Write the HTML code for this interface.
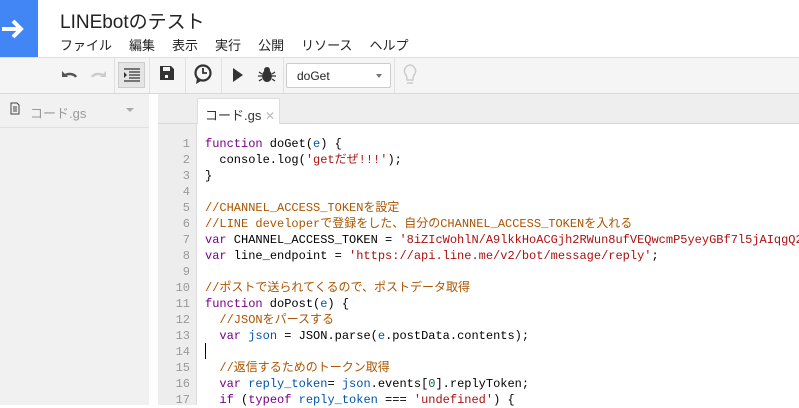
<!DOCTYPE html>
<html><head><meta charset="utf-8"><style>
*{margin:0;padding:0;box-sizing:border-box}
body{width:799px;height:405px;overflow:hidden;background:#fff;font-family:"Liberation Sans","Noto Sans CJK JP",sans-serif;position:relative}
.abs{position:absolute}
.logo{left:0;top:0;width:38px;height:57px;background:#4285f4}
.title{left:60px;top:7px;font-size:19px;color:#222}
.menu{left:60px;top:35px;font-size:13px;color:#222;white-space:nowrap}
.menu span{margin-right:17px}
.tb{left:0;top:57px;width:799px;height:37px;background:#f5f5f5;border-top:1px solid #e0e0e0;border-bottom:1px solid #d8d8d8}
.sep{top:58px;width:1px;height:35px;background:#e0e0e0}
.left{left:0;top:94px;width:149px;height:311px;background:#f1f1f1}
.lhead{left:0;top:94px;width:149px;height:34px;border-bottom:1px solid #e0e0e0}
.ed{left:158px;top:94px;width:641px;height:311px;background:#eee}
.tabbar{left:158px;top:94px;width:641px;height:30px;background:#eee;border-bottom:1px solid #d9d9d9}
.tab{left:197px;top:98px;width:83px;height:27px;background:#fff;border:1px solid #ddd;border-bottom:none;font-size:13px;color:#333;padding:6px 0 0 7px}
.gut{left:158px;top:124px;width:39px;height:281px;background:#ededed;border-right:1px solid #ddd}
.code{left:197px;top:124px;width:602px;height:281px;background:#fff}
.ln{position:absolute;left:158px;width:32px;height:16px;line-height:16px;text-align:right;font:12px/16px "Liberation Mono",monospace;color:#999}
.cl{position:absolute;left:205px;height:16px;font:12px/16px "Liberation Mono","Noto Sans CJK JP",monospace;color:#000;white-space:pre}
.k{color:#708}.v{color:#05a}.s{color:#a11}.c{color:#a50}.n{color:#164}
</style></head><body>
<div class="abs logo"><svg width="38" height="57"><path d="M2 29h18M13 21l8 8-8 8" stroke="#fff" stroke-width="4" fill="none"/></svg></div>
<div class="abs title">LINEbotのテスト</div>
<div class="abs menu"><span>ファイル</span><span>編集</span><span>表示</span><span>実行</span><span>公開</span><span>リソース</span><span>ヘルプ</span></div>
<div class="abs tb"></div>
<div class="abs sep" style="left:114px"></div><div class="abs sep" style="left:149px"></div><div class="abs sep" style="left:185px"></div><div class="abs sep" style="left:221px"></div><div class="abs sep" style="left:283px"></div><div class="abs sep" style="left:394px"></div>
<svg class="abs" style="left:60px;top:66px" width="48" height="18"><path d="M4 10a7 5 0 0 1 12 1" stroke="#555" stroke-width="2.5" fill="none"/><path d="M2 5v6h6z" fill="#555"/><path d="M44 10a7 5 0 0 0-12 1" stroke="#ccc" stroke-width="2.5" fill="none"/><path d="M46 5v6h-6z" fill="#ccc"/></svg>
<div class="abs" style="left:118px;top:62px;width:27px;height:26px;background:#e4e4e4;border:1px solid #ccc"></div>
<svg class="abs" style="left:123px;top:67px" width="18" height="16"><path d="M1 2h16M6 5h11M6 8h11M6 11h11M1 14h16" stroke="#333" stroke-width="1.3"/><path d="M1 5l3 3-3 3z" fill="#333"/></svg>
<svg class="abs" style="left:159px;top:65px" width="16" height="16"><path d="M1 1h11l3 3v11H1z" fill="#333"/><rect x="4" y="2" width="7" height="4" fill="#f5f5f5"/><rect x="6" y="10" width="3" height="3" fill="#f5f5f5"/></svg>
<svg class="abs" style="left:193px;top:63px" width="20" height="22"><circle cx="10" cy="10" r="7.5" stroke="#333" stroke-width="2.2" fill="none"/><path d="M10 5v5h4" stroke="#333" stroke-width="1.8" fill="none"/><path d="M4 15l-1 6 5-3z" fill="#333"/></svg>
<svg class="abs" style="left:231px;top:67px" width="48" height="16"><path d="M2 1l10 7-10 7z" fill="#333"/><ellipse cx="36" cy="9" rx="5" ry="6" fill="#333"/><circle cx="36" cy="3" r="3" fill="#333"/><path d="M28 5l3 2M44 5l-3 2M27 9h4M45 9h-4M28 14l3-2M44 14l-3-2" stroke="#333" stroke-width="1.3"/></svg>
<div class="abs" style="left:286px;top:63px;width:105px;height:25px;background:#fff;border:1px solid #ccc;border-radius:2px;font-size:12px;color:#222;padding:5px 0 0 10px">doGet<span style="position:absolute;right:8px;top:10px;border:3px solid transparent;border-top:4px solid #777"></span></div>
<svg class="abs" style="left:402px;top:63px" width="16" height="24"><path d="M8 2a6 6 0 0 0-4 10c1 2 1 3 1 5h6c0-2 0-3 1-5a6 6 0 0 0-4-10z" stroke="#ccc" stroke-width="1.5" fill="none"/><path d="M5 20h6" stroke="#ccc" stroke-width="1.5"/></svg>
<div class="abs left"></div><div class="abs lhead"></div>
<svg class="abs" style="left:10px;top:102px" width="10" height="13"><path d="M1 1h6l2 2v9H1z" stroke="#444" fill="none"/><path d="M3 5h4M3 7h4M3 9h4" stroke="#444"/></svg>
<div class="abs" style="left:30px;top:103px;font-size:13px;color:#999">コード.gs</div>
<div class="abs" style="left:126px;top:108px;border:4px solid transparent;border-top:4px solid #aaa"></div>
<div class="abs ed"></div><div class="abs tabbar"></div>
<div class="abs tab">コード.gs <span style="color:#bbb;font-size:12px">✕</span></div>
<div class="abs gut"></div><div class="abs code"></div>
<div class="ln" style="top:136px">1</div><div class="ln" style="top:152px">2</div><div class="ln" style="top:168px">3</div><div class="ln" style="top:184px">4</div><div class="ln" style="top:200px">5</div><div class="ln" style="top:216px">6</div><div class="ln" style="top:232px">7</div><div class="ln" style="top:248px">8</div><div class="ln" style="top:264px">9</div><div class="ln" style="top:280px">10</div><div class="ln" style="top:296px">11</div><div class="ln" style="top:312px">12</div><div class="ln" style="top:328px">13</div><div class="ln" style="top:344px">14</div><div class="ln" style="top:360px">15</div><div class="ln" style="top:376px">16</div><div class="ln" style="top:392px">17</div>
<div class="cl" style="top:136px"><span class="k">function</span> doGet(<span class="v">e</span>) {</div>
<div class="cl" style="top:152px">  console.log(<span class="s">'getだぜ!!!'</span>);</div>
<div class="cl" style="top:168px">}</div>
<div class="cl c" style="top:200px">//CHANNEL_ACCESS_TOKENを設定</div>
<div class="cl c" style="top:216px">//LINE developerで登録をした、自分のCHANNEL_ACCESS_TOKENを入れる</div>
<div class="cl" style="top:232px"><span class="k">var</span> CHANNEL_ACCESS_TOKEN = <span class="s">'8iZIcWohlN/A9lkkHoACGjh2RWun8ufVEQwcmP5yeyGBf7l5jAIqgQ2</span></div>
<div class="cl" style="top:248px"><span class="k">var</span> line_endpoint = <span class="s">'https://api.line.me/v2/bot/message/reply'</span>;</div>
<div class="cl c" style="top:280px">//ポストで送られてくるので、ポストデータ取得</div>
<div class="cl" style="top:296px"><span class="k">function</span> doPost(<span class="v">e</span>) {</div>
<div class="cl c" style="top:312px">  //JSONをパースする</div>
<div class="cl" style="top:328px">  <span class="k">var</span> <span class="v">json</span> = JSON.parse(<span class="v">e</span>.postData.contents);</div>
<div class="abs" style="left:205px;top:343px;width:1px;height:16px;background:#000"></div>
<div class="cl c" style="top:360px">  //返信するためのトークン取得</div>
<div class="cl" style="top:376px">  <span class="k">var</span> <span class="v">reply_token</span>= <span class="v">json</span>.events[<span class="n">0</span>].replyToken;</div>
<div class="cl" style="top:392px">  <span class="k">if</span> (<span class="k">typeof</span> <span class="v">reply_token</span> === <span class="s">'undefined'</span>) {</div>
</body></html>
